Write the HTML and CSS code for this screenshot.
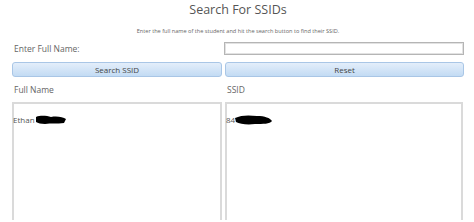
FILE: index.html
```html
<!DOCTYPE html>
<html lang="en">
<head>
  <meta charset="UTF-8">
  <meta name="viewport" content="width=device-width, initial-scale=1.0">
  <title>Search For SSIDs</title>
  <link rel="stylesheet" href="styles.css">
</head>
<body>
  <div class="page">
    <h1 class="title">Search For SSIDs</h1>
    <p class="hint">Enter the full name of the student and hit the search button to find their SSID.</p>

    <div class="grid">
      <label class="label name-label" for="fullName">Enter Full Name:</label>
      <input class="name-input" id="fullName" type="text">

      <button class="btn">Search SSID</button>
      <button class="btn">Reset</button>

      <div class="label col-label">Full Name</div>
      <div class="label col-label">SSID</div>

      <div class="result">
        <span class="result-text">Ethan</span>
        <svg class="redact" width="32" height="12" viewBox="0 0 32 12">
          <path d="M1 3 C6 1 12 2 16 3 C22 2 28 3 31 5 L29 9 C22 10 16 9 10 10 C6 10 3 9 1 8 Z" fill="#000"/>
        </svg>
      </div>
      <div class="result">
        <span class="result-text">84</span>
        <svg class="redact" width="38" height="12" viewBox="0 0 38 12">
          <path d="M0 4 C6 1 14 1 22 2 C30 2 35 4 37 7 C35 10 28 10 20 10 C12 11 5 10 1 8 Z" fill="#000"/>
        </svg>
      </div>
    </div>
  </div>
</body>
</html>
```

FILE: styles.css
```css
body {
  margin: 0;
  font-family: "Open Sans", "Noto Sans", sans-serif;
  background-color: #fff;
  color: #666;
}

.page {
  padding: 1px 10px 0 12px;
}

.title {
  margin: 0;
  text-align: center;
  font-size: 12.5px;
  font-weight: normal;
  color: #555;
  line-height: 17px;
}

.hint {
  margin: 8px 0 5px;
  text-align: center;
  font-size: 5.6px;
  color: #666;
  line-height: 10px;
}

.grid {
  display: grid;
  grid-template-columns: 210px 1fr;
  column-gap: 3px;
}

.label {
  font-size: 8.5px;
  color: #666;
  padding-left: 2px;
}

.name-label {
  line-height: 14px;
  margin-top: 1px;
}

.name-input {
  box-sizing: border-box;
  height: 13px;
  margin: 1px 0 0 -1px;
  border: 1px solid #b5b5b5;
  box-shadow: inset 0 0 0 1px #e2e2e2;
  padding: 0;
}

.btn {
  box-sizing: border-box;
  height: 15px;
  margin-top: 6px;
  border: 1px solid #a9c6e6;
  border-radius: 3px;
  background: linear-gradient(#e3eefa, #c3dbf4);
  font-family: inherit;
  font-size: 8px;
  color: #444;
  padding: 0;
}

.col-label {
  margin-top: 7px;
  line-height: 12px;
}

.result {
  box-sizing: border-box;
  height: 118px;
  margin-top: 6px;
  border: 2px solid #dadada;
  border-bottom: none;
  padding: 10px 0 0 0;
  display: flex;
  align-items: center;
  align-content: flex-start;
  flex-wrap: wrap;
}

.result + .result {
  margin-right: 1px;
}

.result-text {
  font-size: 8px;
  color: #555;
  line-height: 12px;
  margin-left: -1px;
}

.redact {
  display: block;
}
```
